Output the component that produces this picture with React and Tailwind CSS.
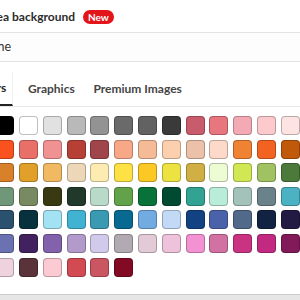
import React from "react";

// swatch colours, row by row (13 visible columns)
const swatches = [
  ["#000000", "#ffffff", "#e1e1e1", "#b9b9b9", "#939393", "#6a6a6a", "#626262", "#3a3a3a", "#c95c6c", "#e8767e", "#f4aab4", "#fcc9cd", "#fde3e1"],
  ["#f9521f", "#e87068", "#f09292", "#b64036", "#a0464a", "#f8a887", "#f4bb96", "#fcd0af", "#ecc1a9", "#fdd9c9", "#f08233", "#f26322", "#c0590a"],
  ["#d8802a", "#e0a02a", "#f0b962", "#ecd8b9", "#fdecb2", "#fde145", "#fcc823", "#ece242", "#d0b044", "#edfcd3", "#d1e854", "#a1c263", "#4b7a3a"],
  ["#709878", "#788a62", "#3a3a12", "#20392a", "#b9d9c9", "#62a24a", "#087238", "#004a32", "#32a292", "#b9edd9", "#a2c2ba", "#6a828a", "#4ab2c2"],
  ["#2a516e", "#08313e", "#a2e2f2", "#42b2d2", "#3a9ab2", "#086a92", "#72aae2", "#c2daf6", "#124282", "#4a62aa", "#526a8a", "#122242", "#221a42"],
  ["#6a72b2", "#42225e", "#8262aa", "#b29aca", "#d2caea", "#b2aab2", "#e2cad6", "#edc2da", "#f292d2", "#d272a2", "#ca3282", "#c22a82", "#821a5a"],
  ["#eed2de", "#5a323a", "#fccad2", "#d24a52", "#ca5662", "#820a22"],
];

const App = () => {
  return (
    <div className="w-[300px] h-[300px] overflow-hidden bg-white font-['Lato','Open_Sans',sans-serif] text-[#2b2b2b]">
      {/* title */}
      <div className="h-[32px] flex items-center gap-[8px] ml-[-16px] pt-[2px]">
        <span className="text-[12px] font-bold whitespace-nowrap">Area background</span>
        <span className="h-[14px] px-[5px] rounded-full bg-[#e3151b] text-white text-[10px] font-bold leading-[14px]">
          New
        </span>
      </div>

      {/* none field */}
      <div className="h-[30px] border border-[#e3e3e3] bg-[#fdfdfd] flex items-center ml-[-30px] mr-[-10px] pl-[10px] text-[12.5px] text-[#333]">
        None
      </div>

      {/* tabs */}
      <div className="mt-[10px] flex border-b border-[#e8e8e8] ml-[-38px] whitespace-nowrap text-[12px] font-bold text-[#444]">
        <button className="h-[34px] pl-[10px] pr-[6px] -mb-px border-b-2 border-r border-r-[#f0f0f0] border-b-[#222] text-[#222]">
          Colors
        </button>
        <button className="h-[34px] pl-[14.6px] pr-[10px]">Graphics</button>
        <button className="h-[34px] pl-[8.7px]">Premium Images</button>
      </div>

      {/* colour grid */}
      <div className="mt-[9px] ml-[-4.8px] grid grid-cols-[repeat(13,19px)] gap-x-[4.8px] gap-y-[4.6px]">
        {swatches.flat().map((c, i) => (
          <div
            key={i}
            className="w-[19px] h-[19px] rounded-[4px] border border-black/25"
            style={{ backgroundColor: c }}
          />
        ))}
      </div>

      {/* bottom edge */}
      <div className="mt-[17px] h-[8px] border-t border-[#cdcdcd] bg-[#e6e6e6]" />
    </div>
  );
};

export default App;
